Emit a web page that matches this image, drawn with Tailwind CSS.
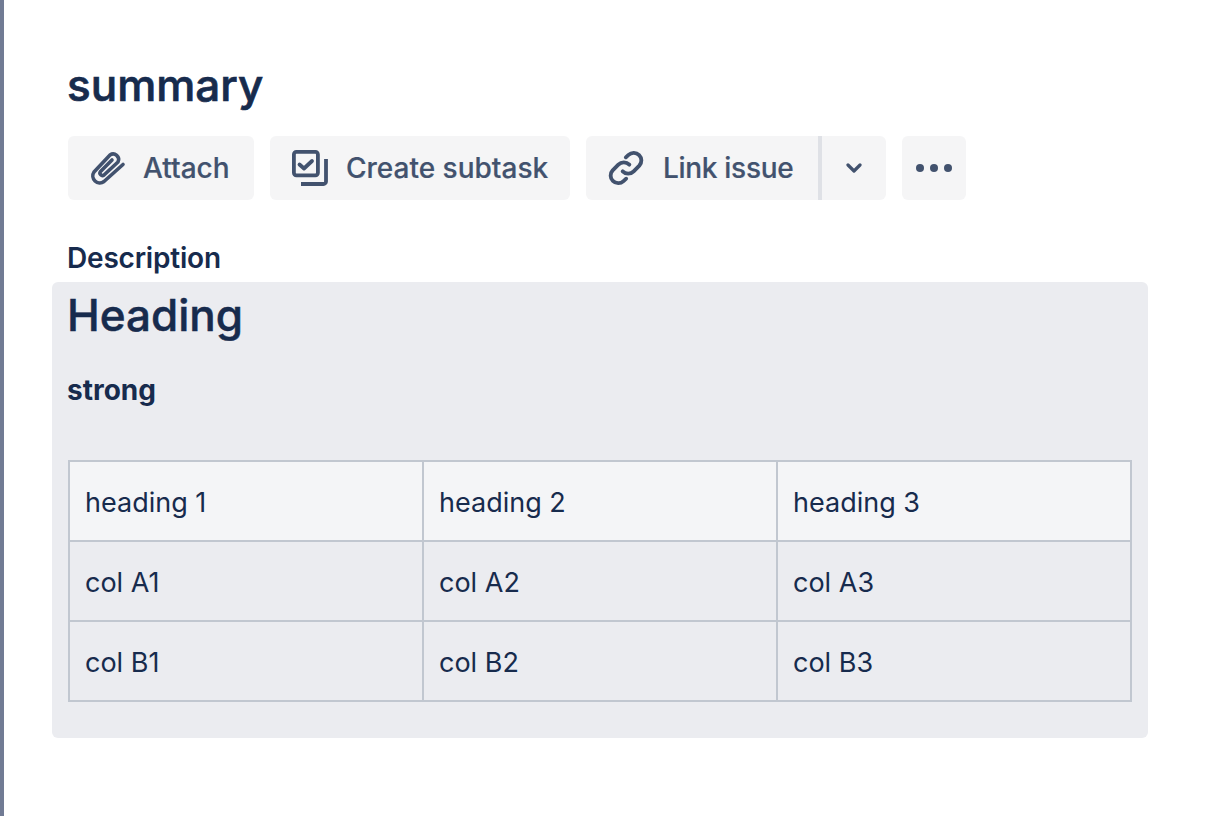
<!DOCTYPE html>
<html lang="en">
  <head>
    <meta charset="UTF-8" />
    <meta name="viewport" content="width=device-width, initial-scale=1.0" />
    <title>Issue</title>
    <script src="https://cdn.jsdelivr.net/npm/@tailwindcss/browser@4"></script>
  </head>
  <body class="bg-white h-[816px] overflow-hidden font-['Inter',sans-serif] text-[#172b4d]">
    <div class="flex h-full">
      <div class="w-[4px] bg-[#717b94]"></div>
      <main class="flex-1 pl-[48px] pt-[59px]">
        <h1 class="pl-[15px] text-[44px] leading-[52px] font-medium [-webkit-text-stroke:0.7px]">summary</h1>

        <div class="flex gap-[16px] pl-[16px] mt-[25px] text-[#42526e] text-[28px] font-medium [-webkit-text-stroke:0.2px]">
          <button class="flex items-center h-[64px] w-[186px] pl-[20px] bg-[#f5f5f6] rounded-[6px]">
            <svg class="w-[40px] h-[40px]" viewBox="0 0 40 40" fill="none" stroke="currentColor" stroke-width="3.6" stroke-linecap="round" stroke-linejoin="round">
              <path d="M35 16.5L16 33.5a7 7 0 0 1-10-9.5L22 7a5.5 5.5 0 0 1 8 7L16 27a2.5 2.5 0 0 1-3.5-3.5L24 12" />
            </svg>
            <span class="ml-[15px]">Attach</span>
          </button>
          <button class="flex items-center h-[64px] w-[300px] pl-[20px] bg-[#f5f5f6] rounded-[6px]">
            <svg class="w-[40px] h-[40px]" viewBox="0 0 40 40" fill="none" stroke="currentColor" stroke-width="3.8" stroke-linejoin="round">
              <rect x="3.9" y="3.9" width="24" height="23.4" rx="2.5" />
              <path stroke-linecap="round" d="M9.5 16.5l4.5 4 8-7.5" />
              <path d="M11 36h22.5a2.5 2.5 0 0 0 2.5-2.5V11" />
            </svg>
            <span class="ml-[16px]">Create subtask</span>
          </button>
          <div class="flex h-[64px] bg-[#f5f5f6] rounded-[6px] w-[300px]">
            <button class="flex items-center w-[232px] pl-[20px]">
              <svg class="w-[40px] h-[40px]" viewBox="0 0 24 24" fill="none" stroke="currentColor" stroke-width="2.3" stroke-linecap="round" stroke-linejoin="round">
                <path d="M10 14a4.6 4.6 0 0 0 6.6 0l3.4-3.4a4.6 4.6 0 0 0-6.5-6.5l-1.6 1.5" />
                <path d="M14 10a4.6 4.6 0 0 0-6.6 0L4 13.4a4.6 4.6 0 0 0 6.5 6.5l1.6-1.5" />
              </svg>
              <span class="ml-[17px] tracking-[-0.3px]">Link issue</span>
            </button>
            <div class="w-[4px] bg-[#dfe1e6]"></div>
            <button class="flex-1 flex items-center justify-center">
              <svg class="w-[16px] h-[10px]" viewBox="0 0 16 10" fill="none" stroke="currentColor" stroke-width="3.2" stroke-linecap="round" stroke-linejoin="round">
                <path d="M2 2l6 6 6-6" />
              </svg>
            </button>
          </div>
          <button class="flex items-center justify-center gap-[6px] h-[64px] w-[64px] bg-[#f5f5f6] rounded-[6px]">
            <span class="w-[8px] h-[8px] rounded-full bg-[#42526e]"></span>
            <span class="w-[8px] h-[8px] rounded-full bg-[#42526e]"></span>
            <span class="w-[8px] h-[8px] rounded-full bg-[#42526e]"></span>
          </button>
        </div>

        <h2 class="pl-[15px] mt-[42px] h-[32px] text-[28px] leading-[32px] font-semibold tracking-[-0.2px]">Description</h2>

        <section class="mt-[8px] w-[1096px] h-[456px] bg-[#ebecf0] rounded-[6px] px-[15px]">
          <h3 class="text-[44px] leading-[66px] font-medium [-webkit-text-stroke:0.5px]">Heading</h3>
          <p class="mt-[26px] h-[32px] text-[28px] leading-[32px] font-bold">strong</p>

          <table class="ml-[1px] mt-[54px] w-[1064px] table-fixed border-collapse text-[27px]">
            <tbody>
              <tr class="h-[80px] bg-[#f4f5f7]">
                <td class="border-2 border-[#c1c7d0] pl-[15px] pt-[4px]">heading 1</td>
                <td class="border-2 border-[#c1c7d0] pl-[15px] pt-[4px]">heading 2</td>
                <td class="border-2 border-[#c1c7d0] pl-[15px] pt-[4px]">heading 3</td>
              </tr>
              <tr class="h-[80px]">
                <td class="border-2 border-[#c1c7d0] pl-[15px] pt-[4px]">col A1</td>
                <td class="border-2 border-[#c1c7d0] pl-[15px] pt-[4px]">col A2</td>
                <td class="border-2 border-[#c1c7d0] pl-[15px] pt-[4px]">col A3</td>
              </tr>
              <tr class="h-[80px]">
                <td class="border-2 border-[#c1c7d0] pl-[15px] pt-[4px]">col B1</td>
                <td class="border-2 border-[#c1c7d0] pl-[15px] pt-[4px]">col B2</td>
                <td class="border-2 border-[#c1c7d0] pl-[15px] pt-[4px]">col B3</td>
              </tr>
            </tbody>
          </table>
        </section>
      </main>
    </div>
  </body>
</html>
